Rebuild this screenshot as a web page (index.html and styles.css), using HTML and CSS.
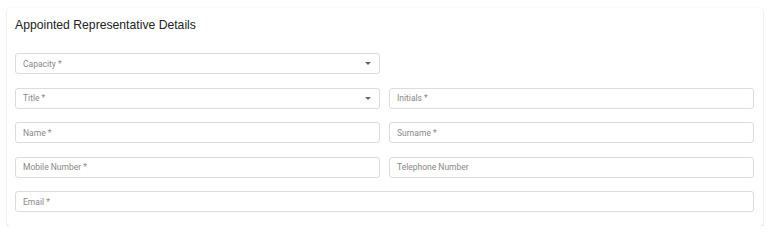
FILE: index.html
```html
<!DOCTYPE html>
<html lang="en">
<head>
    <meta charset="UTF-8">
    <title>Appointed Representative Details</title>
    <link rel="stylesheet" href="styles.css">
</head>
<body>
    <div class="card">
        <h2 class="card-title">Appointed Representative Details</h2>
        <div class="form-grid">
            <div class="field select"><span class="label">Capacity *</span><span class="arrow"></span></div>
            <div></div>
            <div class="field select"><span class="label">Title *</span><span class="arrow"></span></div>
            <div class="field"><span class="label">Initials *</span></div>
            <div class="field"><span class="label">Name *</span></div>
            <div class="field"><span class="label">Surname *</span></div>
            <div class="field"><span class="label">Mobile Number *</span></div>
            <div class="field"><span class="label">Telephone Number</span></div>
            <div class="field wide"><span class="label">Email *</span></div>
        </div>
    </div>
</body>
</html>
```

FILE: styles.css
```css
body {
    margin: 0;
    background-color: #fff;
    font-family: Roboto, "Liberation Sans", Arial, sans-serif;
}
.card {
    margin: 8px 5px 0 7px;
    height: 218px;
    box-sizing: border-box;
    padding: 9px 9px 0 8px;
    background-color: #fff;
    border-radius: 3px;
    box-shadow: 0 1px 2px rgba(0, 0, 0, 0.18), 0 0 1px rgba(0, 0, 0, 0.08);
}
.card-title {
    margin: 0;
    font-family: "Liberation Sans", Arial, sans-serif;
    font-size: 12.2px;
    font-weight: 400;
    color: #222;
    line-height: 16px;
}
.form-grid {
    margin-top: 20px;
    display: grid;
    grid-template-columns: 1fr 1fr;
    column-gap: 9px;
    row-gap: 13.5px;
}
.field {
    height: 21px;
    box-sizing: border-box;
    border: 1px solid #dcdcdc;
    border-radius: 3px;
    display: flex;
    align-items: center;
    padding: 0 7px;
}
.field.wide {
    grid-column: 1 / 3;
}
.label {
    flex: 1;
    font-size: 8.5px;
    color: #888;
}
.arrow {
    width: 0;
    height: 0;
    margin-right: 1px;
    border-left: 3px solid transparent;
    border-right: 3px solid transparent;
    border-top: 3px solid #666;
}
```
